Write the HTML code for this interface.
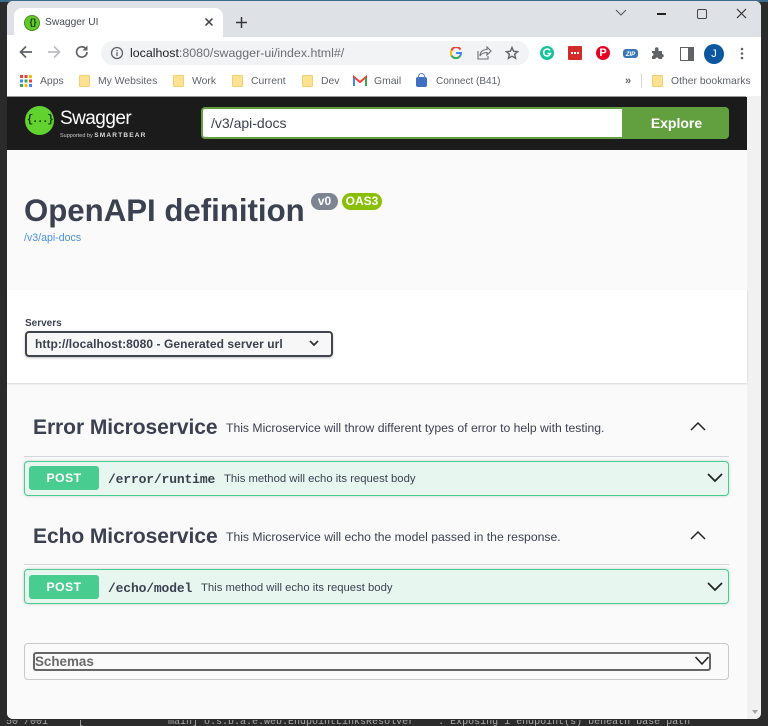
<!DOCTYPE html>
<html><head><meta charset="utf-8">
<style>
html,body{margin:0;padding:0;width:768px;height:726px;overflow:hidden;background:#2b2b2b;font-family:"Liberation Sans",sans-serif}
div,span,svg{position:absolute;white-space:nowrap}
.bm{top:75px;font-size:10.4px;line-height:14px;color:#5f6368}
.fold{top:73px;width:11px;height:12px;background:#fde293;border:1px solid #f3cf6e;box-sizing:border-box;border-radius:1px}
.t{color:#3b4151}
.op{left:24px;width:705px;height:35px;box-sizing:border-box;background:#e8f6f0;border:1px solid #49cc90;border-radius:4px;box-shadow:0 0 3px rgba(0,0,0,.19)}
.post{left:29px;width:70px;height:24px;background:#49cc90;border-radius:3px;color:#fff;font-weight:bold;font-size:12.3px;line-height:24px;text-align:center;letter-spacing:.4px}
.path{font-family:"Liberation Mono",monospace;font-weight:bold;font-size:13px;color:#3b4151;line-height:16px;letter-spacing:-.15px}
.sum{font-size:11.3px;color:#3b4151;line-height:16px}
.h{left:33px;font-size:21px;font-weight:bold;color:#3b4151;line-height:26px;letter-spacing:-.06px}
.hd{left:226px;font-size:12.2px;color:#3b4151;line-height:16px}
.rule{left:24px;width:705px;height:1px;background:#d5d6d9}
</style></head><body>
<div style="left:0;top:0;width:768px;height:2px;background:#3d6a8a"></div>
<div style="left:0;top:720px;width:768px;font:10px 'Liberation Mono',monospace;color:#aaa;line-height:6px;height:6px;overflow:hidden">&nbsp;50 /001&nbsp;&nbsp;&nbsp;&nbsp;&nbsp;[&nbsp;&nbsp;&nbsp;&nbsp;&nbsp;&nbsp;&nbsp;&nbsp;&nbsp;&nbsp;&nbsp;&nbsp;&nbsp;&nbsp;main] o.s.b.a.e.web.EndpointLinksResolver&nbsp;&nbsp;&nbsp;&nbsp;: Exposing 1 endpoint(s) beneath base path</div>

<div style="left:7px;top:1px;width:754px;height:718px;background:#fff;border-radius:6px;overflow:hidden">
  <div style="left:0;top:0;width:754px;height:36px;background:#dee1e6"></div>
  <div style="left:7px;top:7px;width:209px;height:30px;background:#fff;border-radius:8px 8px 0 0"></div>
  <div style="left:0;top:34px;width:7px;height:3px;background:#fff"></div>
  <div style="left:739px;top:95px;width:15px;height:623px;background:#f1f1f1"></div>
  <div style="left:0;top:95px;width:739px;height:1px;background:#9a9a9a"></div>
</div>

<!-- tab -->
<div style="left:24px;top:15px;width:14px;height:14px;border-radius:50%;background:#62c92b;border:1px solid #3f8f1a"></div>
<div style="left:25px;top:15px;width:16px;text-align:center;font:bold 9px/15px 'Liberation Sans',sans-serif;color:#173b06">{}</div>
<div style="left:45px;top:15px;font-size:10.2px;line-height:15px;color:#45494e;letter-spacing:.02px">Swagger UI</div>
<svg style="left:204px;top:17px" width="10" height="10" viewBox="0 0 10 10"><path d="M1.500 1.500L8.500 8.500M8.500 1.500L1.500 8.500" stroke="#3c4043" stroke-width="1.500"/></svg>
<svg style="left:235px;top:16px" width="13" height="13" viewBox="0 0 13 13"><path d="M6.500 1V12M1 6.500H12" stroke="#35373a" stroke-width="1.500"/></svg>

<!-- window controls -->
<svg style="left:615px;top:9px" width="12" height="8" viewBox="0 0 12 8"><path d="M1 1L6 6L11 1" stroke="#55585c" stroke-width="1.100" fill="none"/></svg>
<div style="left:657px;top:13px;width:9px;height:1.500px;background:#222"></div>
<div style="left:697px;top:9px;width:8px;height:8px;border:1.300px solid #444;border-radius:2px"></div>
<svg style="left:736px;top:8px" width="11" height="11" viewBox="0 0 11 11"><path d="M1 1L10 10M10 1L1 10" stroke="#333" stroke-width="1.200"/></svg>

<!-- toolbar -->
<svg style="left:18px;top:44px" width="16" height="16" viewBox="0 0 16 16"><path d="M14 8H3M8 2.500L2.500 8L8 13.500" stroke="#5f6368" stroke-width="1.700" fill="none"/></svg>
<svg style="left:46px;top:44px" width="16" height="16" viewBox="0 0 16 16"><path d="M2 8H13M8 2.500L13.500 8L8 13.500" stroke="#bcbec1" stroke-width="1.700" fill="none"/></svg>
<svg style="left:74px;top:44px" width="16" height="16" viewBox="0 0 16 16"><path d="M13 8A5.200 5.200 0 1 1 11.500 4.300" stroke="#5f6368" stroke-width="1.700" fill="none"/><path d="M13.500 1.500V6.500H8.500Z" fill="#5f6368"/></svg>
<div style="left:101px;top:41px;width:428px;height:24px;background:#f1f3f4;border-radius:12px"></div>
<svg style="left:110px;top:46px" width="14" height="14" viewBox="0 0 14 14"><circle cx="7" cy="7" r="5.500" stroke="#5f6368" stroke-width="1.300" fill="none"/><path d="M7 6.300V10M7 4V5.200" stroke="#5f6368" stroke-width="1.300"/></svg>
<div style="left:130px;top:46px;font-size:12.4px;line-height:15px;color:#6b6f73"><span style="position:static;color:#202124">localhost</span>:8080/swagger-ui/index.html#/</div>
<svg style="left:450px;top:47px" width="12" height="12" viewBox="0 0 12 12"><path d="M10.500 2.500A5 5 0 0 0 1.500 3.500" stroke="#ea4335" stroke-width="2" fill="none"/><path d="M1.500 3.500A5 5 0 0 0 1.500 8.500" stroke="#fbbc05" stroke-width="2" fill="none"/><path d="M1.500 8.500A5 5 0 0 0 10 9" stroke="#34a853" stroke-width="2" fill="none"/><path d="M10 9A5 5 0 0 0 11 6H6" stroke="#4285f4" stroke-width="2" fill="none"/></svg>
<svg style="left:477px;top:46px" width="15" height="14" viewBox="0 0 15 14"><path d="M10 1L14 5L10 9V6.500C6 6.500 4 8 3 10C3 6 5.500 3.500 10 3.500Z M1 5V13H11V10" stroke="#6b6f73" stroke-width="1.100" fill="none"/></svg>
<svg style="left:505px;top:46px" width="14" height="14" viewBox="0 0 14 14"><path d="M7 1.500L8.600 5.300L12.700 5.600L9.600 8.300L10.600 12.300L7 10.200L3.400 12.300L4.400 8.300L1.300 5.600L5.400 5.300Z" stroke="#5f6368" stroke-width="1.400" fill="none"/></svg>

<!-- extensions -->
<div style="left:540px;top:46px;width:14px;height:14px;border-radius:50%;background:#15c39a"></div>
<svg style="left:540px;top:46px" width="14" height="14" viewBox="0 0 14 14"><path d="M10 4.500A3.500 3.500 0 1 0 10.500 7.500H7.500" stroke="#fff" stroke-width="1.500" fill="none"/></svg>
<div style="left:568px;top:46px;width:14px;height:14px;background:#d32a2a;border-radius:1px"></div>
<div style="left:571px;top:52px;width:8px;height:2px;border-top:2px dotted #fff;box-sizing:border-box"></div>
<div style="left:596px;top:46px;width:14px;height:14px;border-radius:50%;background:#e60023;color:#fff;font:bold 11px/14px 'Liberation Sans',sans-serif;text-align:center">P</div>
<div style="left:623px;top:49px;width:15px;height:9px;border-radius:3px;background:#3b77b8"></div>
<svg style="left:623px;top:49px" width="15" height="9" viewBox="0 0 15 9"><text x="7.500" y="7" text-anchor="middle" fill="#fff" font-family="Liberation Sans" font-weight="bold" font-style="italic" font-size="6">ZIP</text></svg>
<svg style="left:651px;top:46px" width="14" height="14" viewBox="0 0 14 14"><path d="M1 5H4V3A1.500 1.500 0 0 1 7.500 3V5H11V8A1.500 1.500 0 0 1 11 11.500V13H7.500A1.500 1.500 0 0 0 4.500 13H1V10A1.500 1.500 0 0 0 1 7Z" fill="#5f6368"/></svg>
<div style="left:680px;top:47px;width:12px;height:12px;border:1.500px solid #5f6368;box-sizing:content-box;background:linear-gradient(90deg,#fff 0 7px,#5f6368 7px)"></div>
<div style="left:704px;top:44px;width:20px;height:20px;border-radius:50%;background:#0b57a0;color:#fff;font:11px/20px 'Liberation Sans',sans-serif;text-align:center">J</div>
<svg style="left:740px;top:47px" width="4" height="13" viewBox="0 0 4 13"><circle cx="2" cy="2" r="1.300" fill="#5f6368"/><circle cx="2" cy="6.500" r="1.300" fill="#5f6368"/><circle cx="2" cy="11" r="1.300" fill="#5f6368"/></svg>

<!-- bookmarks -->
<svg style="left:20px;top:75px" width="12" height="12" viewBox="0 0 12 12"><g><rect x="0" y="0" width="3" height="3" fill="#ea4335"/><rect x="4.500" y="0" width="3" height="3" fill="#ea4335"/><rect x="9" y="0" width="3" height="3" fill="#fbbc05"/><rect x="0" y="4.500" width="3" height="3" fill="#4285f4"/><rect x="4.500" y="4.500" width="3" height="3" fill="#34a853"/><rect x="9" y="4.500" width="3" height="3" fill="#ea4335"/><rect x="0" y="9" width="3" height="3" fill="#34a853"/><rect x="4.500" y="9" width="3" height="3" fill="#fbbc05"/><rect x="9" y="9" width="3" height="3" fill="#4285f4"/></g></svg>
<div class="bm" style="left:40px">Apps</div>
<div class="fold" style="left:79px;top:75px"></div><div class="bm" style="left:98px">My Websites</div>
<div class="fold" style="left:173px;top:75px"></div><div class="bm" style="left:192px">Work</div>
<div class="fold" style="left:232px;top:75px"></div><div class="bm" style="left:251px">Current</div>
<div class="fold" style="left:302px;top:75px"></div><div class="bm" style="left:321px">Dev</div>
<svg style="left:353px;top:75px" width="14" height="12" viewBox="0 0 14 12"><path d="M1 11V2L7 7L13 2V11" stroke="#ea4335" stroke-width="2" fill="none"/><path d="M1 11V3" stroke="#4285f4" stroke-width="2"/><path d="M13 11V3" stroke="#34a853" stroke-width="2"/></svg>
<div class="bm" style="left:374px">Gmail</div>
<div style="left:416px;top:77px;width:11px;height:10px;background:#3f6fc0;border-radius:2px"></div>
<div style="left:418px;top:73px;width:5px;height:5px;border:1.300px solid #5a7fc8;border-bottom:0;border-radius:4px 4px 0 0"></div>
<div class="bm" style="left:436px;font-size:10px">Connect (B41)</div>
<div style="left:625px;top:75px;font-size:11px;line-height:13px;color:#5f6368;font-weight:bold">»</div>
<div style="left:641px;top:74px;width:1px;height:14px;background:#d5d6d8"></div>
<div class="fold" style="left:652px;top:75px"></div><div class="bm" style="left:671px">Other bookmarks</div>

<!-- swagger page -->
<div style="left:7px;top:97px;width:740px;height:622px;background:#fafafa;border-radius:0 0 0 6px"></div>
<div style="left:7px;top:97px;width:740px;height:53px;background:#1b1b1b"></div>
<div style="left:25px;top:106px;width:29px;height:29px;border-radius:50%;background:#62d32e"></div>
<div style="left:25px;top:106px;width:29px;text-align:center;font:bold 11px/28px 'Liberation Mono',monospace;color:#173b06;letter-spacing:-1.500px">{...}</div>
<div style="left:60px;top:108px;font-size:19px;line-height:22px;color:#fff;letter-spacing:-.55px">Swagger</div>
<div style="left:60px;top:132px;font-size:5.5px;line-height:7px;color:#ccc">Supported by <span style="position:static;font-weight:bold;font-size:6.5px;letter-spacing:1.200px;color:#ddd">SMARTBEAR</span></div>
<div style="left:201px;top:107px;width:423px;height:32px;box-sizing:border-box;background:#fff;border:2px solid #62a03f;border-radius:4px 0 0 4px;font-size:14px;line-height:28px;padding-left:8px;color:#3b4151">/v3/api-docs</div>
<div style="left:624px;top:107px;width:105px;height:32px;background:#62a03f;border-radius:0 4px 4px 0;color:#fff;font-weight:bold;font-size:14px;line-height:32px;text-align:center">Explore</div>

<div class="t" style="left:24px;top:192px;font-size:31.2px;font-weight:bold;line-height:38px">OpenAPI definition</div>
<div style="left:311px;top:193px;width:27px;height:17px;background:#7d8492;border-radius:9px;color:#fff;font:bold 12px/17px 'Liberation Sans',sans-serif;text-align:center">v0</div>
<div style="left:342px;top:193px;width:40px;height:17px;background:#89bf04;border-radius:9px;color:#fff;font:bold 12px/17px 'Liberation Sans',sans-serif;text-align:center">OAS3</div>
<div style="left:24px;top:232px;font-size:10.6px;line-height:13px;color:#4990e2">/v3/api-docs</div>

<div style="left:7px;top:290px;width:740px;height:93px;background:#fff;box-shadow:0 1px 2px rgba(0,0,0,.15)"></div>
<div class="t" style="left:25px;top:317px;font-size:10px;font-weight:bold;line-height:13px">Servers</div>
<div style="left:25px;top:331px;width:308px;height:26px;box-sizing:border-box;background:#f7f7f7;border:2px solid #41444e;border-radius:4px;box-shadow:0 1px 2px rgba(0,0,0,.25);font-size:12px;font-weight:bold;line-height:22px;padding-left:8px;color:#3b4151;letter-spacing:.07px">http://localhost:8080 - Generated server url</div>
<svg style="left:309px;top:340px" width="10" height="7" viewBox="0 0 10 7"><path d="M1 1L5 5L9 1" stroke="#333" stroke-width="1.700" fill="none"/></svg>

<!-- Error -->
<div class="h" style="top:415px">Error Microservice</div>
<div class="hd" style="top:420px">This Microservice will throw different types of error to help with testing.</div>
<svg style="left:689px;top:421px" width="18" height="11" viewBox="0 0 18 11"><path d="M2 9L9 2L16 9" stroke="#222" stroke-width="1.500" fill="none"/></svg>
<div class="rule" style="top:456px"></div>
<div class="op" style="top:461px"></div>
<div class="post" style="top:466px">POST</div>
<div class="path" style="left:108px;top:472px">/error/runtime</div>
<div class="sum" style="left:224px;top:471px">This method will echo its request body</div>
<svg style="left:706px;top:472px" width="18" height="12" viewBox="0 0 18 12"><path d="M2 2L9 9L16 2" stroke="#222" stroke-width="1.700" fill="none"/></svg>

<!-- Echo -->
<div class="h" style="top:524px">Echo Microservice</div>
<div class="hd" style="top:529px">This Microservice will echo the model passed in the response.</div>
<svg style="left:689px;top:530px" width="18" height="11" viewBox="0 0 18 11"><path d="M2 9L9 2L16 9" stroke="#222" stroke-width="1.500" fill="none"/></svg>
<div class="rule" style="top:564px"></div>
<div class="op" style="top:569px"></div>
<div class="post" style="top:575px">POST</div>
<div class="path" style="left:108px;top:581px">/echo/model</div>
<div class="sum" style="left:201px;top:580px">This method will echo its request body</div>
<svg style="left:706px;top:581px" width="18" height="12" viewBox="0 0 18 12"><path d="M2 2L9 9L16 2" stroke="#222" stroke-width="1.700" fill="none"/></svg>

<!-- Schemas -->
<div style="left:24px;top:643px;width:705px;height:37px;box-sizing:border-box;border:1px solid #c9c9c9;border-radius:4px"></div>
<div style="left:33px;top:652px;width:678px;height:19px;box-sizing:border-box;border:2px solid #666;border-radius:3px"></div>
<div style="left:35px;top:653px;font-size:13.4px;font-weight:bold;line-height:17px;color:#6b6b6b">Schemas</div>
<svg style="left:694px;top:655px" width="16" height="12" viewBox="0 0 16 12"><path d="M1.500 2L8 9L14.500 2" stroke="#222" stroke-width="1.600" fill="none"/></svg>
<div style="left:752px;top:710px;width:0;height:0;border:3.500px solid transparent;border-top:4px solid #a3a3a3"></div>
</body></html>
